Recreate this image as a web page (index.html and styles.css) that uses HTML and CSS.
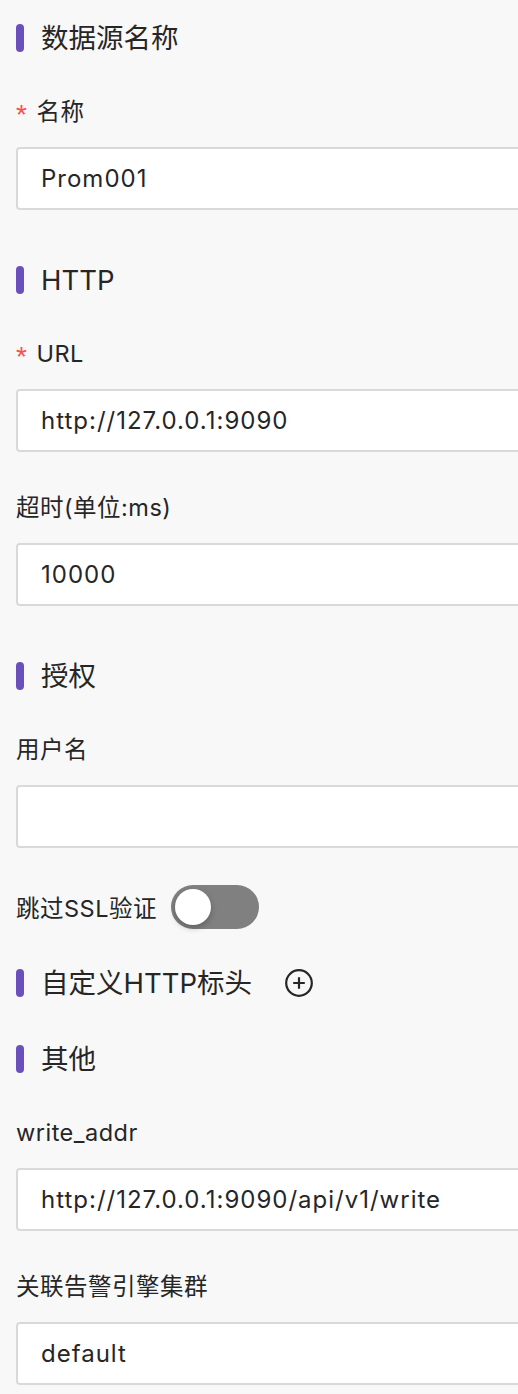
FILE: index.html
```html
<!DOCTYPE html>
<html lang="zh-CN">
<head>
<meta charset="utf-8">
<title>数据源</title>
<link rel="stylesheet" href="styles.css">
</head>
<body>
<div class="form">
  <div class="section-title"><span class="bar"></span><span class="title-text">数据源名称</span></div>
  <div class="form-item">
    <div class="label"><span class="required">*</span>名称</div>
    <div class="input">Prom001</div>
  </div>

  <div class="section-title"><span class="bar"></span><span class="title-text">HTTP</span></div>
  <div class="form-item">
    <div class="label"><span class="required">*</span>URL</div>
    <div class="input">http://127.0.0.1:9090</div>
  </div>
  <div class="form-item">
    <div class="label">超时(单位:ms)</div>
    <div class="input">10000</div>
  </div>

  <div class="section-title"><span class="bar"></span><span class="title-text">授权</span></div>
  <div class="form-item">
    <div class="label">用户名</div>
    <div class="input"></div>
  </div>
  <div class="switch-item">
    <span class="switch-label">跳过SSL验证</span>
    <span class="switch"><span class="knob"></span></span>
  </div>

  <div class="section-title"><span class="bar"></span><span class="title-text">自定义HTTP标头</span>
    <svg class="plus-icon" width="28" height="28" viewBox="0 0 28 28" aria-hidden="true">
      <circle cx="14" cy="14" r="12.8" fill="none" stroke="#262626" stroke-width="2.2"/>
      <path d="M14 8.2V19.8M8.2 14H19.8" stroke="#262626" stroke-width="2.2" fill="none"/>
    </svg>
  </div>
  <div class="section-title"><span class="bar"></span><span class="title-text">其他</span></div>
  <div class="form-item">
    <div class="label">write_addr</div>
    <div class="input">http://127.0.0.1:9090/api/v1/write</div>
  </div>
  <div class="form-item">
    <div class="label">关联告警引擎集群</div>
    <div class="input">default</div>
  </div>
</div>
</body>
</html>
```

FILE: styles.css
```css
html, body {
  margin: 0;
  padding: 0;
  background: #f8f8f8;
  overflow: hidden;
}
body {
  font-family: Inter, "Noto Sans CJK SC", sans-serif;
  color: #262626;
}
.form {
  display: flex;
  flex-direction: column;
  align-items: stretch;
  padding: 16px 0 0 16px;
}
.section-title {
  display: flex;
  align-items: center;
  height: 44px;
  margin-bottom: 30px;
}
.form-item + .section-title {
  margin-top: 13px;
}
.section-title + .section-title {
  margin-top: 2px;
}
.bar {
  width: 8px;
  height: 28px;
  border-radius: 4px;
  background: #6b4fbb;
  flex: none;
}
.title-text {
  margin-left: 17px;
  font-size: 27.5px;
  line-height: 44px;
}
.plus-icon {
  margin-left: 33px;
  flex: none;
}
.form-item {
  margin-bottom: 35px;
}
.form-item + .form-item {
  margin-top: -1px;
}
.label {
  height: 44px;
  line-height: 44px;
  font-size: 23.5px;
  letter-spacing: 0.5px;
  display: flex;
  align-items: center;
}
.required {
  color: #ff4d4f;
  margin-right: 9px;
  font-size: 28px;
  font-family: "Liberation Sans", sans-serif;
  position: relative;
  top: 3px;
}
.input {
  margin-top: 13px;
  box-sizing: border-box;
  height: 63px;
  width: 560px;
  background: #fff;
  border: 2px solid #d9d9d9;
  border-radius: 4px;
  padding-left: 23px;
  display: flex;
  align-items: center;
  font-size: 24px;
  letter-spacing: 1px;
  color: #262626;
}
.switch-item {
  display: flex;
  align-items: center;
  height: 44px;
  margin-top: 2px;
  margin-bottom: 32px;
}
.switch-label {
  font-size: 23.5px;
  letter-spacing: 0.5px;
  margin-right: 14px;
}
.switch {
  position: relative;
  width: 88px;
  height: 44px;
  border-radius: 22px;
  background: #808080;
  flex: none;
}
.knob {
  position: absolute;
  left: 4px;
  top: 4px;
  width: 36px;
  height: 36px;
  border-radius: 50%;
  background: #fff;
  box-shadow: 0 3px 6px rgba(0, 0, 0, 0.25);
}
```
